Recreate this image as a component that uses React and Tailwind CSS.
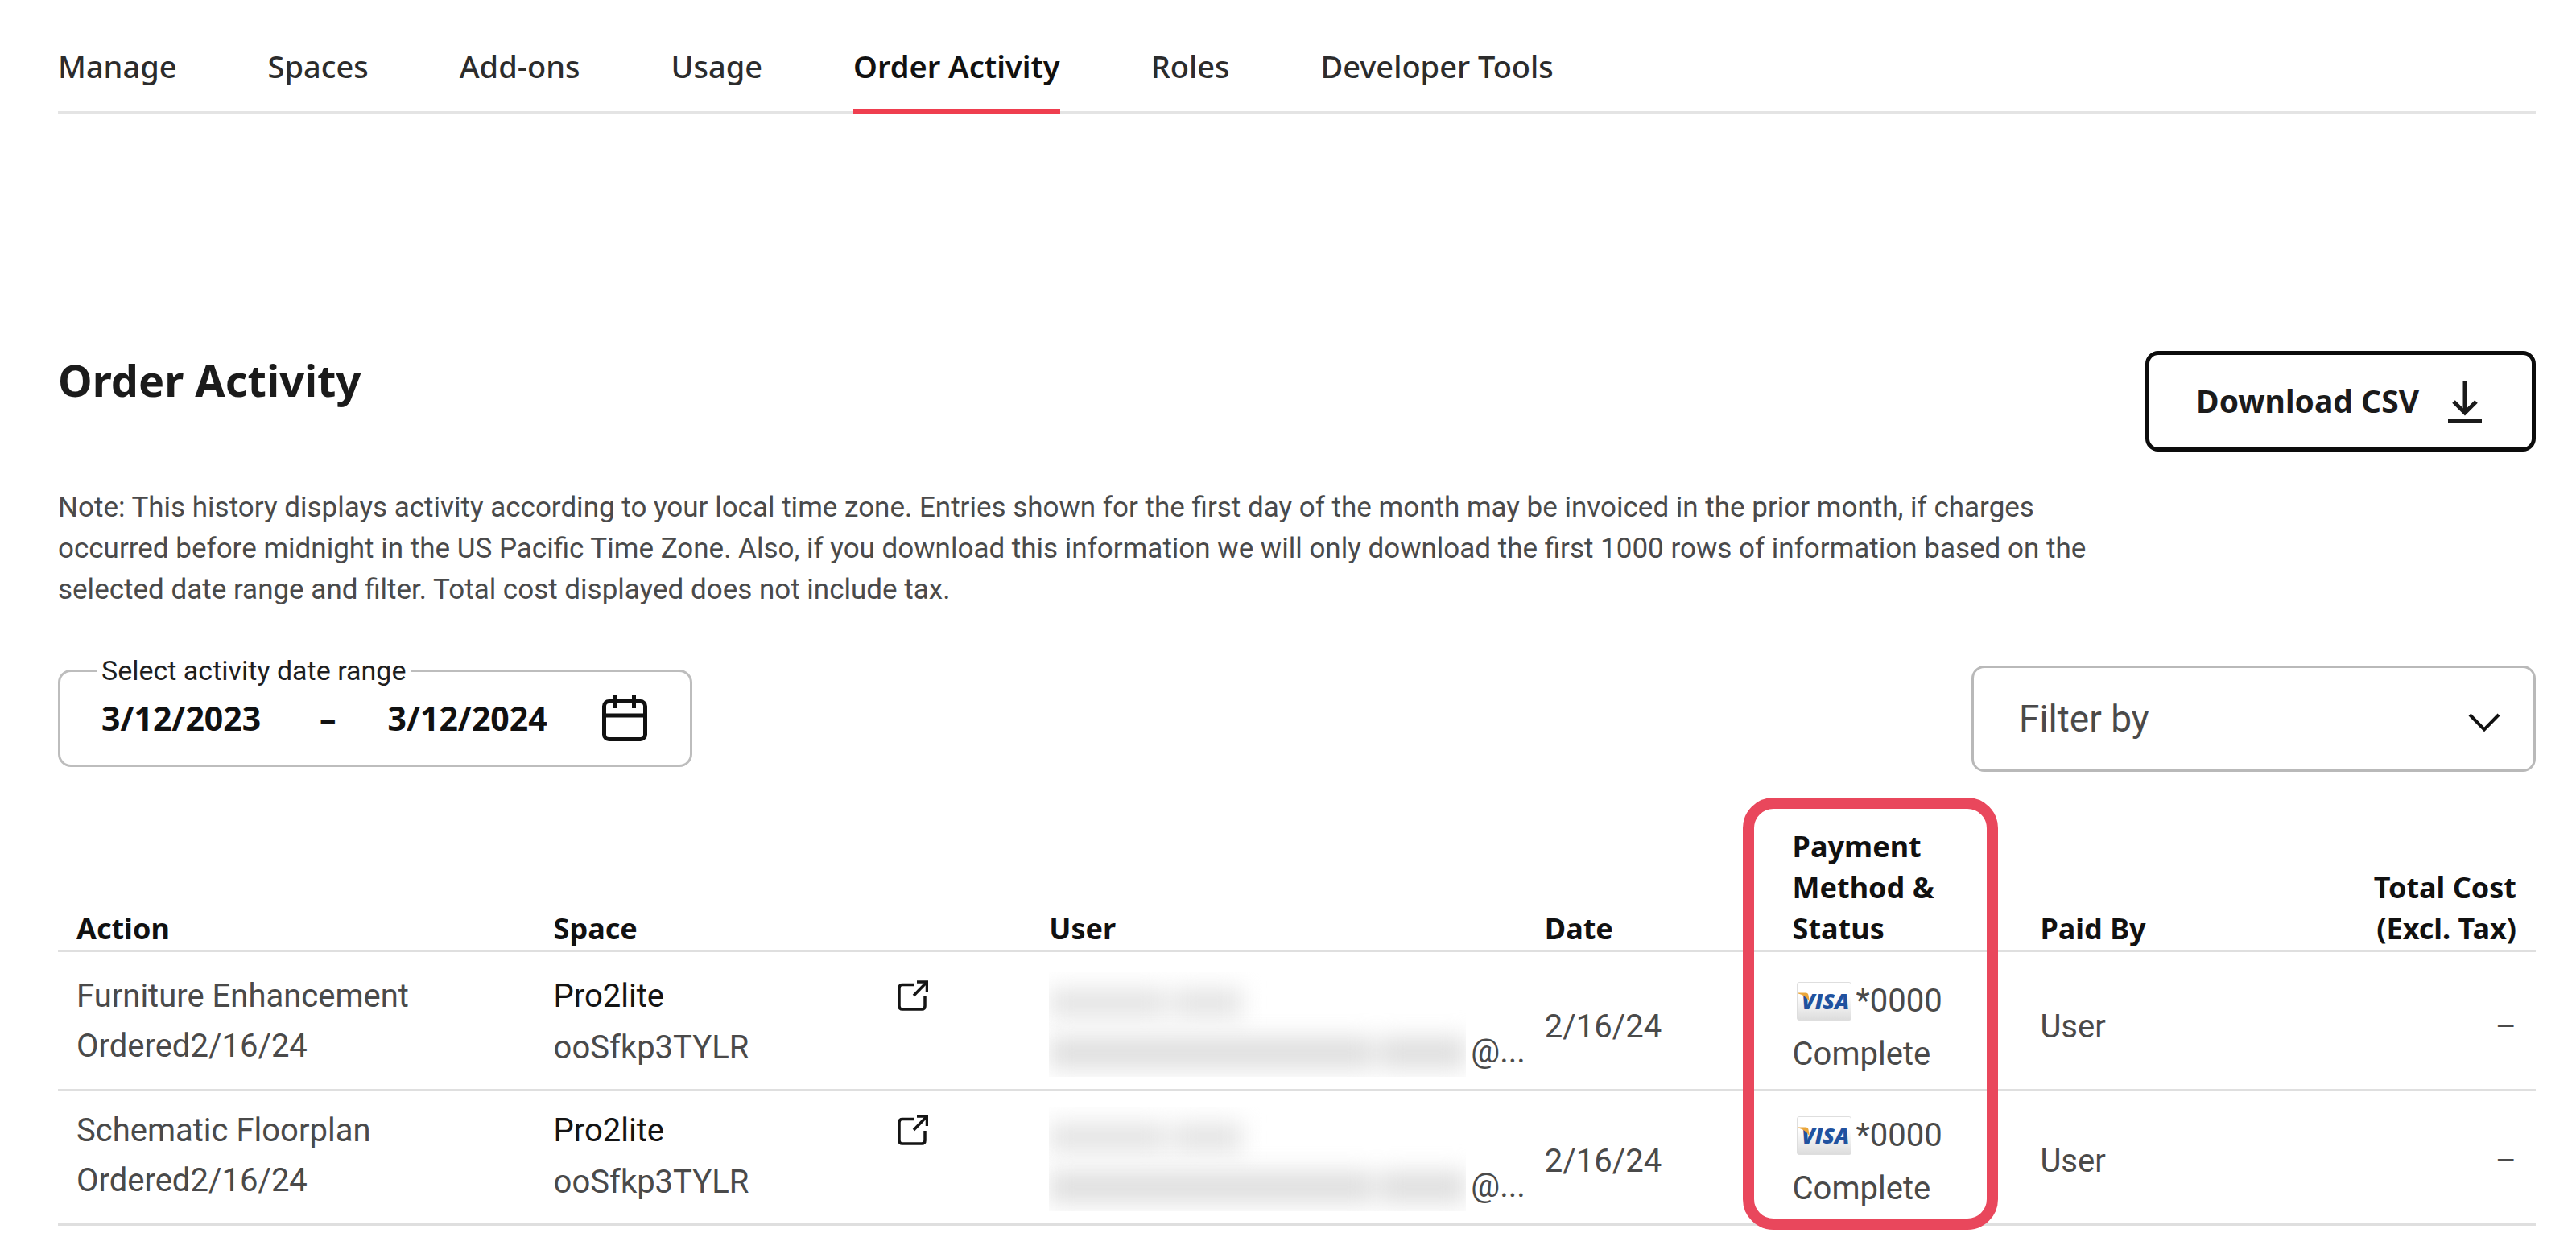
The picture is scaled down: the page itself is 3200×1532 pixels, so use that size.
import React from "react";

const TABS = ["Manage", "Spaces", "Add-ons", "Usage", "Order Activity", "Roles", "Developer Tools"];

const ORDERS = [
  { action: "Furniture Enhancement", ordered: "2/16/24", space: "Pro2lite", spaceId: "ooSfkp3TYLR", date: "2/16/24", card: "*0000", status: "Complete", paidBy: "User", total: "–" },
  { action: "Schematic Floorplan", ordered: "2/16/24", space: "Pro2lite", spaceId: "ooSfkp3TYLR", date: "2/16/24", card: "*0000", status: "Complete", paidBy: "User", total: "–" },
];

function DownloadIcon() {
  return (
    <svg width="42" height="52" viewBox="0 0 42 52" fill="none" stroke="currentColor" strokeWidth="5" aria-hidden="true">
      <path d="M21 0V40" />
      <path d="M7 26L21 40L35 26" />
      <path d="M0 49.5H42" />
    </svg>
  );
}

function CalendarIcon() {
  return (
    <svg width="56" height="58" viewBox="0 0 56 58" fill="none" stroke="currentColor" strokeWidth="5" aria-hidden="true">
      <rect x="2.5" y="8.5" width="51" height="47" rx="6" />
      <path d="M2.5 26H53.5" />
      <path d="M16.5 0V17M39.5 0V17" />
    </svg>
  );
}

function ExternalIcon() {
  return (
    <svg width="38" height="38" viewBox="0 0 38 38" fill="none" stroke="currentColor" strokeWidth="3.5" aria-hidden="true">
      <path d="M20 5.5H6Q2 5.5 2 9.5V32Q2 36 6 36H30Q34 36 34 32V20" />
      <path d="M20 19L36 2.5" />
      <path d="M24 2H36.5V14" />
    </svg>
  );
}

function VisaCard() {
  return (
    <svg className="ml-[5px] shrink-0" width="68" height="48" viewBox="0 0 68 48" role="img" aria-label="Visa">
      <defs>
        <linearGradient id="card" x1="0" y1="0" x2="0" y2="1">
          <stop offset="0.35" stopColor="#ffffff" />
          <stop offset="1" stopColor="#dcdcdc" />
        </linearGradient>
      </defs>
      <rect x="0.5" y="0.5" width="67" height="47" rx="2.5" fill="url(#card)" stroke="#dedede" />
      <text x="6" y="34" fontSize="27" fontWeight="800" fontStyle="italic" fill="#20529f" fontFamily="'Open Sans', sans-serif">VISA</text>
      <path d="M2 13.5H11Q14 13.5 14.5 16.5L16 25Q11 16.5 2 14.5Z" fill="#eaa63b" />
    </svg>
  );
}

function HiddenUser() {
  return (
    <div className="flex h-[130px] items-start">
      <div className="h-full min-w-0 flex-1 overflow-hidden" aria-hidden="true">
        <div className="mt-5 flex gap-2 blur-[14px]">
          <div className="h-9 w-[146px] bg-[#e4e4e4]" />
          <div className="h-9 w-[86px] bg-[#e4e4e4]" />
        </div>
        <div className="mt-6 flex gap-2 blur-[14px]">
          <div className="h-10 w-[414px] bg-[#dfdfdf]" />
          <div className="h-10 w-[110px] bg-[#dfdfdf]" />
        </div>
      </div>
      <span className="mt-[67px] mr-6 ml-1.5 leading-[64px]">@...</span>
    </div>
  );
}

const TH = "border-b-[3px] border-[#dfdfdf] pb-px align-bottom font-bold";
const TD = "border-b-[3px] border-[#dfdfdf] p-0";

export default function App() {
  return (
    <div className="bg-white pr-[50px] pb-2 pl-[72px] font-['Roboto',sans-serif] text-[40px] text-[#4a4a4a]">
      <nav className="flex gap-[113px] border-b-4 border-[#e4e4e4] pt-[58px] font-['Noto_Sans',sans-serif] text-[38px] leading-[48px]">
        {TABS.map((tab) =>
          tab === "Order Activity" ? (
            <a key={tab} href="#order-activity" aria-current="page" className="-mb-1 border-b-6 border-[#ef3e4f] pb-[30px] font-semibold text-[#111]">
              {tab}
            </a>
          ) : (
            <a key={tab} href={"#" + tab} className="font-medium text-[#2c2c2c]">
              {tab}
            </a>
          )
        )}
      </nav>

      <main>
        <header className="mt-[294px] flex items-start justify-between">
          <h1 className="font-['Noto_Sans',sans-serif] text-[54px] leading-[72px] font-bold text-[#1b1b1b]">Order Activity</h1>
          <button className="flex h-[125px] items-center gap-9 rounded-2xl border-[5px] border-[#0c0c0c] pr-[62px] pl-[58px] font-['Noto_Sans',sans-serif] text-[39px] font-bold text-[#1b1b1b]">
            Download CSV
            <DownloadIcon />
          </button>
        </header>

        <p className="mt-11 text-[35px] leading-[51px]">
          Note: This history displays activity according to your local time zone. Entries shown for the first day of the month may be invoiced in the prior month, if charges
          <br />
          occurred before midnight in the US Pacific Time Zone. Also, if you download this information we will only download the first 1000 rows of information based on the
          <br />
          selected date range and filter. Total cost displayed does not include tax.
        </p>

        <div className="mt-[54px] flex items-end justify-between">
          <fieldset className="mb-1.5 rounded-2xl border-[3px] border-[#bdbdbd] pt-[9px] pr-[47px] pb-[29px] pl-[45px]">
            <legend className="px-1.5 text-[34px] leading-[42px] text-[#1f1f1f]">Select activity date range</legend>
            <div className="flex items-center gap-[59px] px-1.5 text-[#111]">
              <div className="flex items-center gap-16 font-['Noto_Sans',sans-serif] text-[41px] leading-[58px] font-bold">
                <input aria-label="Start date" defaultValue="3/12/2023" className="h-[58px] w-[207px]" />
                <span>–</span>
                <input aria-label="End date" defaultValue="3/12/2024" className="h-[58px] w-[207px]" />
              </div>
              <button aria-label="Open calendar">
                <CalendarIcon />
              </button>
            </div>
          </fieldset>
          <div className="relative w-[701px]">
            <select aria-label="Filter by" className="block h-[132px] w-full appearance-none rounded-2xl border-[3px] border-[#b9b9b9] bg-white pl-14 text-[46px] text-[#4a4a4a]">
              <option>Filter by</option>
            </select>
            <svg className="pointer-events-none absolute top-[59px] right-[44px] text-[#111]" width="40" height="24" viewBox="0 0 40 24" fill="none" stroke="currentColor" strokeWidth="4" aria-hidden="true">
              <path d="M2 2L20 20.5L38 2" />
            </svg>
          </div>
        </div>

        <div className="relative mt-[67px]">
          <table className="w-full table-fixed border-separate border-spacing-0 text-left">
            <thead className="font-['Noto_Sans',sans-serif] text-[36px] leading-[51px] text-[#111]">
              <tr>
                <th scope="col" className={TH + " w-[20%] pl-[23px]"}>Action</th>
                <th scope="col" className={TH + " w-[20%]"}>Space</th>
                <th scope="col" className={TH + " w-[20%]"}>User</th>
                <th scope="col" className={TH + " w-[10%]"}>Date</th>
                <th scope="col" className={TH + " w-[10%]"}>Payment<br />Method &amp;<br />Status</th>
                <th scope="col" className={TH + " w-[10%]"}>Paid By</th>
                <th scope="col" className={TH + " w-[10%] pr-6 text-right"}>Total Cost<br />(Excl. Tax)</th>
              </tr>
            </thead>
            <tbody>
              {ORDERS.map((o) => (
                <tr key={o.action} className="group">
                  <td className={TD + " pt-[18px] pl-[23px] align-top leading-[62px] group-first:pt-6"}>
                    {o.action}
                    <br />
                    Ordered{o.ordered}
                  </td>
                  <td className={TD + " pt-[17px] align-top leading-[64px] group-first:pt-[23px]"}>
                    <div className="flex items-start justify-between pr-[150px]">
                      <div>
                        <div className="text-[#141414]">{o.space}</div>
                        <div>{o.spaceId}</div>
                      </div>
                      <a href={"#" + o.spaceId} aria-label="Open space" className="mt-3 text-[#141414]">
                        <ExternalIcon />
                      </a>
                    </div>
                  </td>
                  <td className={TD + " pt-[19px] align-top group-first:pt-[25px]"}>
                    <HiddenUser />
                  </td>
                  <td className={TD + " pt-2.5 align-middle group-first:pt-4"}>{o.date}</td>
                  <td className={TD + " pt-[22px] pb-[10px] align-top leading-[66px] group-first:pt-7"}>
                    <div className="flex items-center gap-1.5">
                      <VisaCard />
                      {o.card}
                    </div>
                    <div>{o.status}</div>
                  </td>
                  <td className={TD + " pt-2.5 align-middle group-first:pt-4"}>{o.paidBy}</td>
                  <td className={TD + " pt-2.5 pr-6 text-right align-middle group-first:pt-4"}>{o.total}</td>
                </tr>
              ))}
            </tbody>
          </table>
          <div className="pointer-events-none absolute -top-[35px] -bottom-[5px] left-[68%] w-[10.3%] rounded-[38px] border-[14px] border-[#e9475c]" />
        </div>
      </main>
    </div>
  );
}
